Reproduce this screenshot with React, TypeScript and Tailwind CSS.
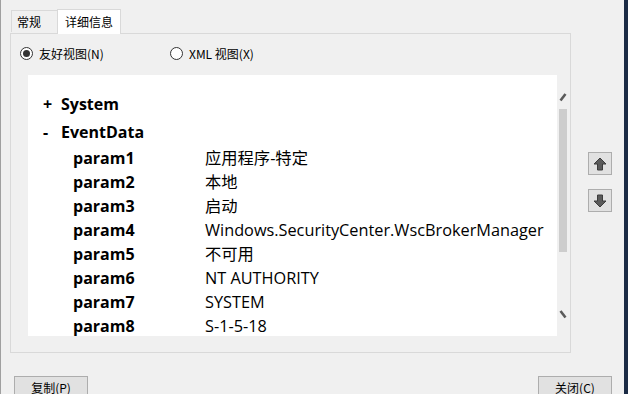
import React from "react";

const ui = { fontFamily: '"Noto Sans CJK SC", "Noto Sans", sans-serif' };
const content = { fontFamily: '"Open Sans", "Noto Sans CJK SC", sans-serif' };

const rows: [string, string][] = [
  ["param1", "应用程序-特定"],
  ["param2", "本地"],
  ["param3", "启动"],
  ["param4", "Windows.SecurityCenter.WscBrokerManager"],
  ["param5", "不可用"],
  ["param6", "NT AUTHORITY"],
  ["param7", "SYSTEM"],
  ["param8", "S-1-5-18"],
];

function Radio({ checked }: { checked?: boolean }) {
  return (
    <span className="w-[13px] h-[13px] rounded-full border border-[#333333] bg-white flex items-center justify-center shrink-0">
      {checked && <span className="w-[7px] h-[7px] rounded-full bg-[#333333]" />}
    </span>
  );
}

function ArrowBtn({ down }: { down?: boolean }) {
  return (
    <div className="w-[24px] h-[23px] border border-[#adadad] bg-[#e1e1e1] flex items-center justify-center">
      <svg width="14" height="14" viewBox="0 0 14 14" style={{ transform: down ? "rotate(180deg)" : undefined }}>
        <path d="M7 1 L13 7 L9.5 7 L9.5 13 L4.5 13 L4.5 7 L1 7 Z" fill="#5a5a5a" stroke="#3c3c3c" strokeWidth="1" strokeLinejoin="miter" />
      </svg>
    </div>
  );
}

export default function App() {
  return (
    <div className="w-[628px] h-[394px] bg-[#f0f0f0] flex overflow-hidden text-black" style={ui}>
      <div className="w-px bg-[#a0a0a0] shrink-0" />
      <div className="flex-1 flex flex-col">
        {/* tabs */}
        <div className="flex items-end pt-[9px] pl-[10px] h-[34px] relative z-10">
          <div className="w-[46px] h-[22px] border-t border-l border-[#d9d9d9] bg-[#f0f0f0] text-[12px] leading-none flex items-center pl-[5px] mb-px">
            常规
          </div>
          <div className="w-[64px] h-[25px] border-t border-l border-r border-[#d9d9d9] bg-white text-[12px] leading-none flex items-center pl-[7px] pb-[1px] -mb-px">
            详细信息
          </div>
        </div>
        {/* panel + side buttons */}
        <div className="flex">
          <div className="ml-[9px] w-[561px] h-[320px] border border-[#d9d9d9] bg-[#f0f0f0] flex flex-col">
            <div className="h-[38px] flex items-center pl-[9px] text-[12px] leading-none pt-[1px]">
              <div className="w-[150px] flex items-center gap-[6px]">
                <Radio checked />
                <span>友好视图(N)</span>
              </div>
              <div className="flex items-center gap-[6px]">
                <Radio />
                <span>XML 视图(X)</span>
              </div>
            </div>
            <div className="flex mt-[3px] ml-[17px] h-[261px]">
              <div className="w-[529px] h-full bg-white overflow-hidden pt-[17px] text-[16px]" style={content}>
                <div className="h-[24px] flex items-center font-bold">
                  <span className="w-[33px] pl-[15px]">+</span>
                  <span>System</span>
                </div>
                <div className="h-[24px] mt-[4px] flex items-center font-bold">
                  <span className="w-[33px] pl-[15px]">-</span>
                  <span>EventData</span>
                </div>
                <div className="mt-[2px]">
                  {rows.map(([k, v]) => (
                    <div key={k} className="h-[24px] flex items-center">
                      <span className="w-[132px] ml-[45px] font-bold">{k}</span>
                      <span className="whitespace-nowrap text-[16.3px]">{v}</span>
                    </div>
                  ))}
                </div>
              </div>
              <div className="w-[12px] h-full bg-[#f0f0f0] flex flex-col items-center pt-[17px]">
                <svg width="8" height="10" viewBox="0 0 8 10">
                  <path d="M1.5 8.5 L6.5 2" stroke="#5a5a5a" strokeWidth="2.6" strokeLinecap="butt" />
                </svg>
                <div className="w-[8px] h-[143px] bg-[#cdcdcd] mt-[7px]" />
                <svg width="8" height="10" viewBox="0 0 8 10" className="mt-[57px]">
                  <path d="M1.5 2 L6.5 8.5" stroke="#5a5a5a" strokeWidth="2.6" strokeLinecap="butt" />
                </svg>
              </div>
            </div>
          </div>
          <div className="ml-[17px] pt-[119px] flex flex-col gap-[14px]">
            <ArrowBtn />
            <ArrowBtn down />
          </div>
        </div>
        {/* bottom buttons */}
        <div className="flex justify-between mt-[23px] pl-[13px] pr-[12px]">
          <div className="w-[74px] h-[23px] border border-[#adadad] bg-[#e1e1e1] text-[12px] leading-none flex items-center justify-center">
            复制(P)
          </div>
          <div className="w-[74px] h-[23px] border border-[#adadad] bg-[#e1e1e1] text-[12px] leading-none flex items-center justify-center">
            关闭(C)
          </div>
        </div>
      </div>
      <div className="w-[4px] bg-[#1b2b45] shrink-0" />
    </div>
  );
}
